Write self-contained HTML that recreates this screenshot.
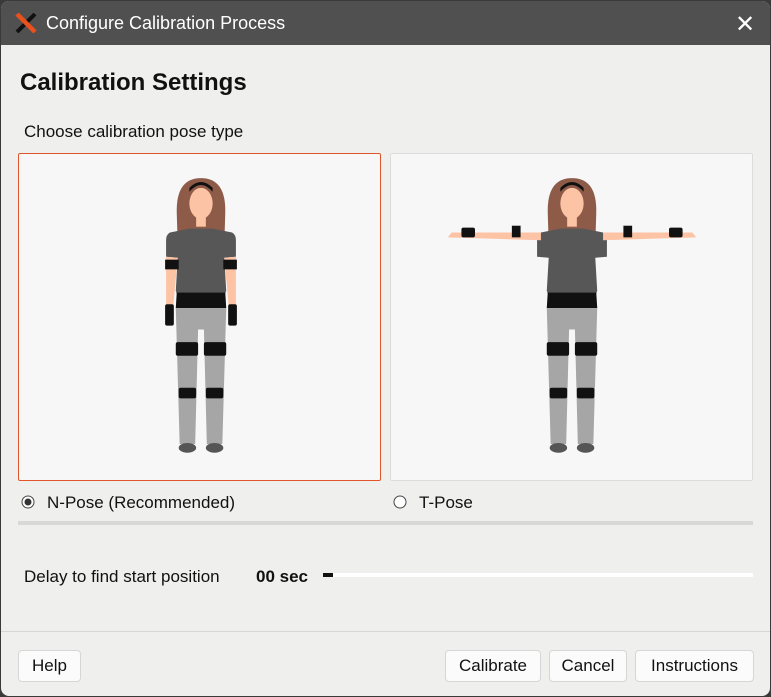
<!DOCTYPE html>
<html><head><style>
body{margin:0;width:771px;height:697px;background:#3a3a3a;font-family:"Liberation Sans",sans-serif;overflow:hidden;position:relative}
.win{position:absolute;left:1px;top:1px;width:769px;height:695px;background:#efefee;border-radius:8px;overflow:hidden}
.tb{position:absolute;left:0;top:0;width:769px;height:44px;background:#505050;color:#fff;font-size:18px}
.t{position:absolute}
.card{position:absolute;top:152px;width:361px;height:326px;background:#f7f7f7;border:1px solid #dcdcdc;border-radius:2px}
.btn{position:absolute;top:649px;height:30px;background:#fbfbfb;border:1px solid #d6d6d6;border-radius:4px;font-size:17px;line-height:30px;text-align:center;color:#111}
</style></head><body>
<div class="win">
<div class="tb">
<svg class="t" style="left:14px;top:12px" width="22" height="20" viewBox="0 0 22 20"><path d="M20 1L2 19" stroke="#111" stroke-width="4"/><path d="M2 1L20 19" stroke="#e8501e" stroke-width="4.5"/></svg>
<div class="t" style="left:45px;top:12px">Configure Calibration Process</div>
<div class="t" style="left:734px;top:9px;font-size:24px;font-weight:300">✕</div>
</div>
<div class="t" style="left:19px;top:68px;font-size:24px;font-weight:bold;color:#111">Calibration Settings</div>
<div class="t" style="left:23px;top:121px;font-size:17px;color:#111">Choose calibration pose type</div>
<div class="card" style="left:17px;border-color:#e0562a"></div>
<div class="card" style="left:389px"></div>
<svg class="t" style="left:0;top:0" width="769" height="500">
<defs>
<g id="fig">
<path d="M-25 30Q-26 -6 0 -6Q26 -6 25 30L24 62H-24z" fill="#8d5b48"/>
<ellipse cx="0" cy="20" rx="12" ry="16" fill="#fcc3a4"/>
<path d="M-12 8Q0 -6 12 8L12 4Q0 -8 -12 4z" fill="#111"/>
<rect x="-5" y="32" width="10" height="12" fill="#fcc3a4"/>
<path d="M-12 46L-32 50Q-36 52 -36 58L-36 75L-24 76L-26 110L-24 116H24L26 110L24 76L36 75L36 58Q36 52 32 50L12 46z" fill="#575757"/>
<path d="M-25 112H25L26 128H-26z" fill="#111"/>
<path d="M-26 128H26L22 268H6L3 150H-3L-6 268H-22z" fill="#a6a6a6"/>
<rect x="-26" y="163" width="23" height="14" rx="2" fill="#111"/><rect x="3" y="163" width="23" height="14" rx="2" fill="#111"/>
<rect x="-23" y="210" width="18" height="11" rx="2" fill="#111"/><rect x="5" y="210" width="18" height="11" rx="2" fill="#111"/>
<ellipse cx="-14" cy="272" rx="9" ry="5" fill="#555"/><ellipse cx="14" cy="272" rx="9" ry="5" fill="#555"/>
</g>
</defs>
<g transform="translate(200,183) scale(0.97)">
<use href="#fig"/>
<path d="M-36 75L-36 130L-29 130L-24 76z" fill="#fcc3a4"/><path d="M36 75L36 130L29 130L24 76z" fill="#fcc3a4"/>
<rect x="-37" y="78" width="14" height="10" fill="#111"/><rect x="23" y="78" width="14" height="10" fill="#111"/>
<rect x="-37" y="124" width="9" height="22" rx="2" fill="#111"/><rect x="28" y="124" width="9" height="22" rx="2" fill="#111"/>
</g>
<g transform="translate(571,183) scale(0.97)">
<use href="#fig"/>
<path d="M-32 50L-124 50L-128 55L-32 58z" fill="#fcc3a4"/><path d="M32 50L124 50L128 55L32 58z" fill="#fcc3a4"/>
<rect x="-62" y="43" width="9" height="12" fill="#111"/><rect x="53" y="43" width="9" height="12" fill="#111"/>
<rect x="-114" y="45" width="14" height="10" rx="2" fill="#111"/><rect x="100" y="45" width="14" height="10" rx="2" fill="#111"/>
</g>
</svg>
<svg class="t" style="left:20px;top:494px" width="14" height="14"><circle cx="7" cy="7" r="6" fill="#fff" stroke="#444"/><circle cx="7" cy="7" r="3.5" fill="#333"/></svg>
<div class="t" style="left:46px;top:492px;font-size:17px;color:#111">N-Pose (Recommended)</div>
<svg class="t" style="left:392px;top:494px" width="14" height="14"><circle cx="7" cy="7" r="6" fill="#fff" stroke="#444"/></svg>
<div class="t" style="left:418px;top:492px;font-size:17px;color:#111">T-Pose</div>
<div class="t" style="left:17px;top:520px;width:735px;height:4px;background:#d8d8d8"></div>
<div class="t" style="left:23px;top:566px;font-size:17px;color:#111">Delay to find start position</div>
<div class="t" style="left:255px;top:566px;font-size:17px;font-weight:bold;color:#111">00 sec</div>
<div class="t" style="left:322px;top:572px;width:10px;height:4px;background:#111"></div>
<div class="t" style="left:332px;top:572px;width:420px;height:4px;background:#fff"></div>
<div class="t" style="left:0;top:630px;width:769px;height:1px;background:#d6d6d6"></div>
<div class="btn" style="left:17px;width:61px">Help</div>
<div class="btn" style="left:444px;width:94px">Calibrate</div>
<div class="btn" style="left:548px;width:76px">Cancel</div>
<div class="btn" style="left:634px;width:117px">Instructions</div>
</div>
</body></html>
